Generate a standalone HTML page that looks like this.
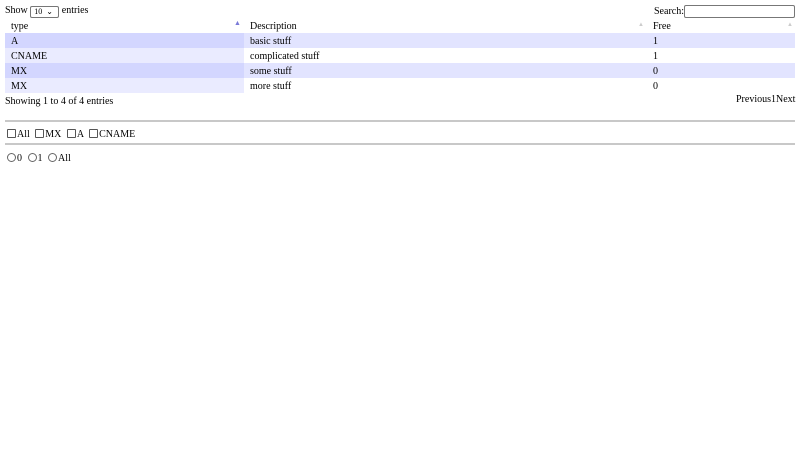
<!DOCTYPE html>
<html><head><style>
body{margin:0;font-family:"Liberation Serif",serif;font-size:10px;color:#000;background:#fff;position:relative;width:800px;height:450px;overflow:hidden}
.a{position:absolute;white-space:nowrap;line-height:15px}
.r{position:absolute;height:15px}
.cb{display:inline-block;width:7px;height:7px;border:1px solid #555;border-radius:1px;vertical-align:-1px;margin:0 1px 0 3px}
.rb{display:inline-block;width:7px;height:7px;border:1px solid #666;border-radius:50%;vertical-align:-1px;margin:0 1px 0 3px}
hr{position:absolute;left:5px;width:790px;margin:0;border:0;border-top:2px solid #c8c8c8;height:0}
</style></head><body>
<div class="a" style="left:5px;top:3px">Show <span style="display:inline-block;border:1px solid #777;border-radius:2px;width:24px;height:10px;line-height:10px;font-size:8px;padding-left:3px;vertical-align:-1px">10 <span style="font-size:8px;margin-left:2px">&#8964;</span></span> entries</div>
<div class="a" style="left:654px;top:4px">Search:</div>
<div style="position:absolute;left:684px;top:5px;width:109px;height:11px;border:1px solid #777;border-radius:2px;background:#fff"></div>
<div class="a" style="left:11px;top:19px">type</div>
<div class="a" style="left:234px;top:16px;font-size:7px;color:#7a7ad8">&#9650;</div>
<div class="a" style="left:250px;top:19px">Description</div>
<div class="a" style="left:638px;top:18px;font-size:6px;color:#ccc">&#9650;</div>
<div class="a" style="left:653px;top:19px">Free</div>
<div class="a" style="left:787px;top:18px;font-size:6px;color:#ccc">&#9650;</div>
<div class="r" style="left:5px;top:33px;width:239px;background:#d3d6ff"></div>
<div class="r" style="left:244px;top:33px;width:551px;background:#e2e4ff"></div>
<div class="r" style="left:5px;top:48px;width:239px;background:#eaebff"></div>
<div class="r" style="left:5px;top:63px;width:239px;background:#d3d6ff"></div>
<div class="r" style="left:244px;top:63px;width:551px;background:#e2e4ff"></div>
<div class="r" style="left:5px;top:78px;width:239px;background:#eaebff"></div>
<div class="a" style="left:11px;top:34px">A</div><div class="a" style="left:250px;top:34px">basic stuff</div><div class="a" style="left:653px;top:34px">1</div>
<div class="a" style="left:11px;top:49px">CNAME</div><div class="a" style="left:250px;top:49px">complicated stuff</div><div class="a" style="left:653px;top:49px">1</div>
<div class="a" style="left:11px;top:64px">MX</div><div class="a" style="left:250px;top:64px">some stuff</div><div class="a" style="left:653px;top:64px">0</div>
<div class="a" style="left:11px;top:79px">MX</div><div class="a" style="left:250px;top:79px">more stuff</div><div class="a" style="left:653px;top:79px">0</div>
<div class="a" style="left:5px;top:94px">Showing 1 to 4 of 4 entries</div>
<div class="a" style="left:736px;top:92px">Previous1Next</div>
<hr style="top:120px">
<div class="a" style="left:4px;top:127px"><span class="cb"></span>All <span class="cb"></span>MX <span class="cb"></span>A <span class="cb"></span>CNAME</div>
<hr style="top:143px">
<div class="a" style="left:4px;top:151px"><span class="rb"></span>0 <span class="rb"></span>1 <span class="rb"></span>All</div>
</body></html>
